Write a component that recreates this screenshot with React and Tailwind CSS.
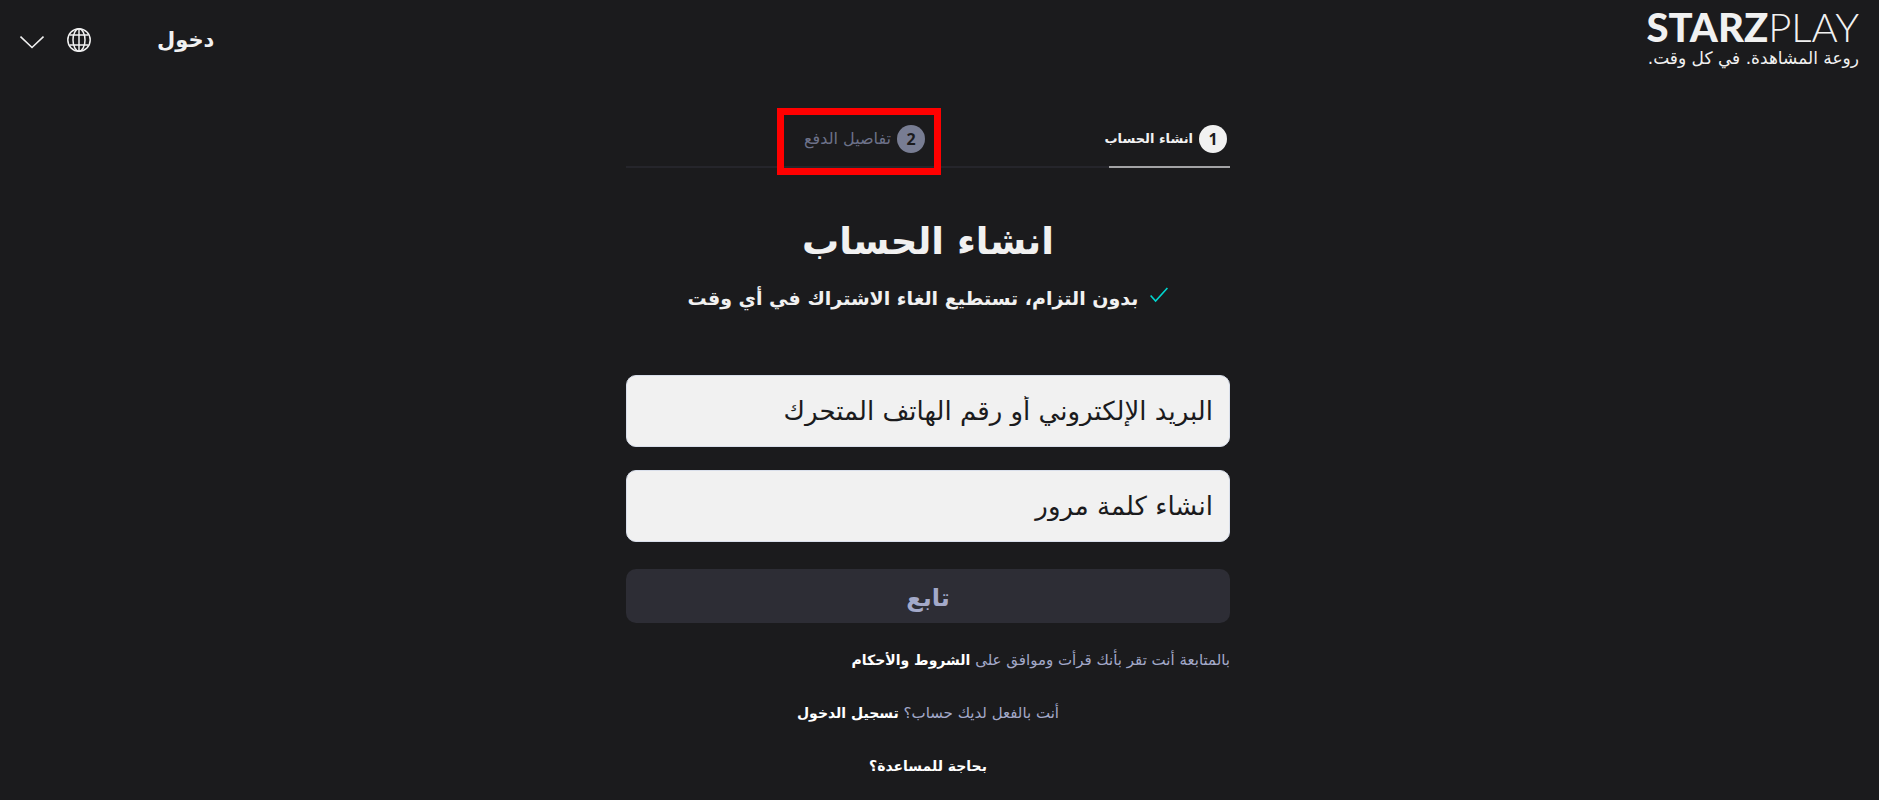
const FIELDS = [
  {
    id: "identifier",
    type: "text",
    placeholder: "البريد الإلكتروني أو رقم الهاتف المتحرك",
    autoComplete: "username",
  },
  {
    id: "password",
    type: "password",
    placeholder: "انشاء كلمة مرور",
    autoComplete: "new-password",
  },
];

export default function App() {
  return (
    <div
      dir="rtl"
      lang="ar"
      className="min-h-screen bg-[#1b1b1d] pb-4 font-['DejaVu_Sans',sans-serif] text-[#f1f1f1]"
    >
      <Header />

      <div className="pr-[23px]">
        <main className="mx-auto flex w-full max-w-[604px] flex-col">
          <Steps />

          <h1 className="mt-[47px] text-center text-[37px] leading-[54px] font-bold">
            انشاء الحساب
          </h1>

          <p className="mt-[15px] flex items-center justify-center gap-3 text-[19px] leading-7 font-bold">
            <CheckIcon />
            <span>بدون التزام، تستطيع الغاء الاشتراك في أي وقت</span>
          </p>

          <SignupForm />

          <p className="mt-[33px] text-center text-[15px] leading-5 text-[#a3a9c9]">
            أنت بالفعل لديك حساب؟{" "}
            <a href="/login" className="text-[14px] font-bold text-white">
              تسجيل الدخول
            </a>
          </p>

          <a
            href="/help"
            className="mt-[33px] self-center text-[14px] leading-5 font-bold text-white"
          >
            بحاجة للمساعدة؟
          </a>
        </main>
      </div>
    </div>
  );
}

function Header() {
  return (
    <header className="flex h-[108px] items-start justify-between px-5 pt-2">
      <a href="/" className="flex flex-col items-stretch">
        <span
          dir="ltr"
          className="font-['Lato',sans-serif] text-[40px] leading-[38px] whitespace-nowrap"
        >
          <span className="font-black">STARZ</span>
          <span className="font-light">PLAY</span>
        </span>
        <span className="text-[17px] leading-6 whitespace-nowrap">
          روعة المشاهدة. في كل وقت.
        </span>
      </a>

      <nav className="flex h-16 items-center">
        <a href="/login" className="text-[21px] leading-8 font-bold">
          دخول
        </a>
        <button
          type="button"
          aria-label="اللغة"
          className="mr-[66px] flex items-center gap-[23px]"
        >
          <GlobeIcon />
          <ChevronIcon />
        </button>
      </nav>
    </header>
  );
}

// ── Progress steps ─────────────────────────────────────────
function Steps() {
  return (
    <div className="relative flex h-[60px] justify-between border-b-2 border-[#25252b]">
      <div className="mt-[17px] mr-[3px] flex h-7 items-center gap-1.5">
        <StepBadge className="bg-[#f1f1f1]">1</StepBadge>
        <span className="text-[13px] leading-5 font-bold">انشاء الحساب</span>
      </div>

      <div className="ml-[151px] flex h-[67px] w-[164px] shrink-0 items-start border-[7px] border-[#ff0000] pt-2.5 pr-[9px]">
        <div className="flex h-7 items-center gap-1.5">
          <StepBadge className="bg-[#787d93]">2</StepBadge>
          <span className="text-[16px] leading-5 whitespace-nowrap text-[#6d728a]">
            تفاصيل الدفع
          </span>
        </div>
      </div>

      <div className="absolute right-0 -bottom-0.5 h-0.5 w-1/5 bg-[#a3a3a5]" />
    </div>
  );
}

function StepBadge({ className, children }) {
  return (
    <span
      className={`flex size-7 items-center justify-center rounded-full font-['Open_Sans',sans-serif] text-[16px] leading-5 font-bold text-[#1b1b1d] ${className}`}
    >
      {children}
    </span>
  );
}

// ── Form ───────────────────────────────────────────────────
function SignupForm() {
  return (
    <form noValidate className="mt-[63px] flex flex-col">
      <div className="flex flex-col gap-[23px]">
        {FIELDS.map((field) => (
          <input
            key={field.id}
            id={field.id}
            name={field.id}
            type={field.type}
            aria-label={field.placeholder}
            placeholder={field.placeholder}
            autoComplete={field.autoComplete}
            className="h-[72px] w-full rounded-[10px] border border-[#d9dfeb] bg-[#f1f1f1] px-4 text-[26px] text-[#1b1b1d] outline-none placeholder:text-[#1b1b1d] placeholder:opacity-100"
          />
        ))}
      </div>

      <button
        type="submit"
        className="mt-[27px] h-[54px] w-full rounded-[10px] bg-[#2d2d35] pt-1 text-[24px] font-bold text-[#a3a9c9]"
      >
        تابع
      </button>

      <p className="mt-[27px] text-[15px] leading-5 text-[#a3a9c9]">
        بالمتابعة أنت تقر بأنك قرأت وموافق على{" "}
        <a href="/terms" className="text-[14px] font-bold text-white">
          الشروط والأحكام
        </a>
      </p>
    </form>
  );
}

// ── Icons ──────────────────────────────────────────────────
function GlobeIcon() {
  return (
    <svg
      width="24"
      height="24"
      viewBox="0 0 24 24"
      fill="none"
      stroke="currentColor"
      strokeWidth="1.5"
    >
      <circle cx="12" cy="12" r="11.2" />
      <ellipse cx="12" cy="12" rx="6" ry="11.2" />
      <path d="M12 1v22M2.6 7h18.8M2.6 17h18.8" />
    </svg>
  );
}

function ChevronIcon() {
  return (
    <svg
      width="24"
      height="14"
      viewBox="0 0 24 14"
      fill="none"
      stroke="currentColor"
      strokeWidth="1.6"
      className="mt-1"
    >
      <path d="M0.5 1.5L12 12.5L23.5 1.5" />
    </svg>
  );
}

function CheckIcon() {
  return (
    <svg
      width="18"
      height="16"
      viewBox="0 0 18 16"
      fill="none"
      stroke="#00d5cf"
      strokeWidth="1.6"
      className="mb-1.5"
    >
      <path d="M0.6 8.5L5.6 14L17.4 1" />
    </svg>
  );
}
